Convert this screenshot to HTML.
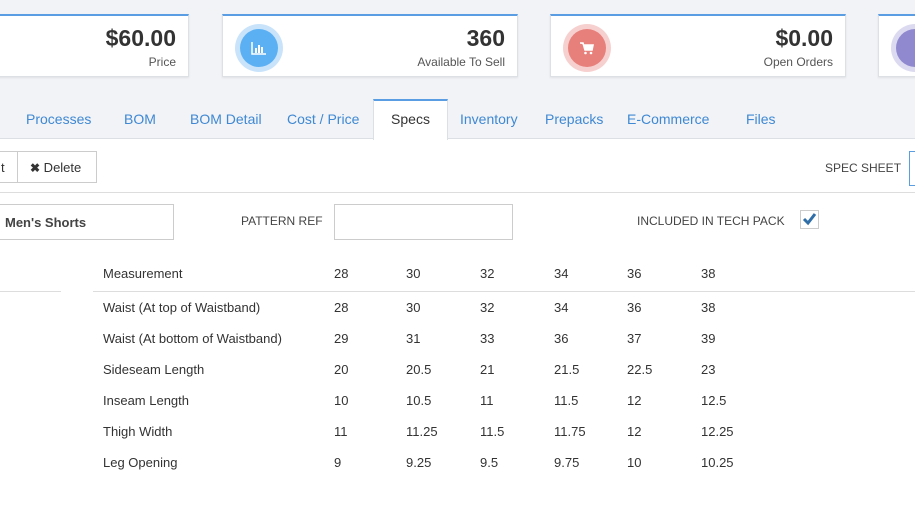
<!DOCTYPE html>
<html><head><style>
*{margin:0;padding:0;box-sizing:border-box}
body{width:915px;height:512px;overflow:hidden;background:#fff;font-family:"Liberation Sans",sans-serif;color:#333;position:relative}
.top{position:absolute;left:0;top:0;width:915px;height:139px;background:#f1f3f7;border-bottom:1px solid #dcdfe4}
.card{position:absolute;top:14px;height:63px;background:#fff;border:1px solid #dde1e6;border-top:2px solid #5a9de2;box-shadow:0 1px 2px rgba(0,0,0,.08)}
.card .v{position:absolute;right:12px;top:9px;font-size:23px;font-weight:bold;color:#333}
.card .l{position:absolute;right:12px;top:39px;font-size:12px;color:#555}
.ic{position:absolute;left:12px;top:8px;width:48px;height:48px;border-radius:50%;display:flex;align-items:center;justify-content:center}
.ic div{width:38px;height:38px;border-radius:50%;display:flex;align-items:center;justify-content:center}
.tab{position:absolute;top:111px;font-size:14px;color:#3f88d3}
.spec{position:absolute;left:373px;top:99px;width:75px;height:41px;background:#fff;border:1px solid #dcdfe4;border-top:2px solid #5a9de2;border-bottom:none;font-size:14px;color:#333;text-align:center;padding-top:10px}
.btn{position:absolute;top:151px;height:32px;border:1px solid #ccc;background:#fff;font-size:13px;padding:8px 0 0 12px}
.hr{position:absolute;height:1px;background:#ddd}
.lab{position:absolute;font-size:12px;color:#444}
.inp{position:absolute;border:1px solid #ccc;background:#fff}
.t{position:absolute;font-size:13px;color:#333}
</style></head><body>
<div class="top"></div>
<div class="card" style="left:-10px;width:199px"><div class="v">$60.00</div><div class="l">Price</div></div>
<div class="card" style="left:222px;width:296px"><div class="ic" style="background:#c9e3fb"><div style="background:#5bb0f3"><svg width="16" height="14" viewBox="0 0 16 14"><path d="M1 1V13H15" stroke="#fff" stroke-width="1.5" fill="none"/><rect x="4" y="7" width="2" height="5" fill="#fff"/><rect x="7" y="4" width="2" height="8" fill="#fff"/><rect x="10" y="6" width="2" height="6" fill="#fff"/></svg></div></div><div class="v">360</div><div class="l">Available To Sell</div></div>
<div class="card" style="left:550px;width:296px"><div class="ic" style="background:#f6d0cf"><div style="background:#e77f7b"><svg width="14" height="13" viewBox="0 0 14 13"><path d="M0 1H3L5 8H12L13 3H4" stroke="#fff" stroke-width="1.6" fill="#fff"/><circle cx="5.5" cy="11" r="1.3" fill="#fff"/><circle cx="11" cy="11" r="1.3" fill="#fff"/></svg></div></div><div class="v">$0.00</div><div class="l">Open Orders</div></div>
<div class="card" style="left:878px;width:60px"><div class="ic" style="background:#dcdaf0"><div style="background:#9089cf"></div></div></div>
<div class="tab" style="left:26px">Processes</div>
<div class="tab" style="left:124px">BOM</div>
<div class="tab" style="left:190px">BOM Detail</div>
<div class="tab" style="left:287px">Cost / Price</div>
<div class="spec">Specs</div>
<div class="tab" style="left:460px">Inventory</div>
<div class="tab" style="left:545px">Prepacks</div>
<div class="tab" style="left:627px">E-Commerce</div>
<div class="tab" style="left:746px">Files</div>
<div class="btn" style="left:-10px;width:28px;padding-left:10px">t</div>
<div class="btn" style="left:17px;width:80px"><b style="font-size:12px">✖</b> Delete</div>
<div class="lab" style="left:825px;top:161px">SPEC SHEET</div>
<div class="inp" style="left:909px;top:151px;width:20px;height:35px;border-color:#5a9de2"></div>
<div class="hr" style="left:0;top:192px;width:915px"></div>
<div class="inp" style="left:-5px;top:204px;width:179px;height:36px"></div>
<div class="t" style="left:5px;top:215px;font-weight:bold;color:#444">Men's Shorts</div>
<div class="lab" style="left:241px;top:214px">PATTERN REF</div>
<div class="inp" style="left:334px;top:204px;width:179px;height:36px"></div>
<div class="lab" style="left:637px;top:214px">INCLUDED IN TECH PACK</div>
<div class="inp" style="left:800px;top:210px;width:19px;height:19px"><svg width="17" height="17" viewBox="0 0 17 17"><path d="M3 8L7 12L14 3" stroke="#2f6ea8" stroke-width="3" fill="none"/></svg></div>
<div class="hr" style="left:0;top:291px;width:61px"></div>
<div class="hr" style="left:93px;top:291px;width:822px"></div>
<div class="t" style="left:103px;top:266px">Measurement</div>
<div class="t" style="left:334px;top:266px">28</div><div class="t" style="left:406px;top:266px">30</div><div class="t" style="left:480px;top:266px">32</div><div class="t" style="left:554px;top:266px">34</div><div class="t" style="left:627px;top:266px">36</div><div class="t" style="left:701px;top:266px">38</div>
<div class="t" style="left:103px;top:300px">Waist (At top of Waistband)</div>
<div class="t" style="left:334px;top:300px">28</div><div class="t" style="left:406px;top:300px">30</div><div class="t" style="left:480px;top:300px">32</div><div class="t" style="left:554px;top:300px">34</div><div class="t" style="left:627px;top:300px">36</div><div class="t" style="left:701px;top:300px">38</div>
<div class="t" style="left:103px;top:331px">Waist (At bottom of Waistband)</div>
<div class="t" style="left:334px;top:331px">29</div><div class="t" style="left:406px;top:331px">31</div><div class="t" style="left:480px;top:331px">33</div><div class="t" style="left:554px;top:331px">36</div><div class="t" style="left:627px;top:331px">37</div><div class="t" style="left:701px;top:331px">39</div>
<div class="t" style="left:103px;top:362px">Sideseam Length</div>
<div class="t" style="left:334px;top:362px">20</div><div class="t" style="left:406px;top:362px">20.5</div><div class="t" style="left:480px;top:362px">21</div><div class="t" style="left:554px;top:362px">21.5</div><div class="t" style="left:627px;top:362px">22.5</div><div class="t" style="left:701px;top:362px">23</div>
<div class="t" style="left:103px;top:393px">Inseam Length</div>
<div class="t" style="left:334px;top:393px">10</div><div class="t" style="left:406px;top:393px">10.5</div><div class="t" style="left:480px;top:393px">11</div><div class="t" style="left:554px;top:393px">11.5</div><div class="t" style="left:627px;top:393px">12</div><div class="t" style="left:701px;top:393px">12.5</div>
<div class="t" style="left:103px;top:424px">Thigh Width</div>
<div class="t" style="left:334px;top:424px">11</div><div class="t" style="left:406px;top:424px">11.25</div><div class="t" style="left:480px;top:424px">11.5</div><div class="t" style="left:554px;top:424px">11.75</div><div class="t" style="left:627px;top:424px">12</div><div class="t" style="left:701px;top:424px">12.25</div>
<div class="t" style="left:103px;top:455px">Leg Opening</div>
<div class="t" style="left:334px;top:455px">9</div><div class="t" style="left:406px;top:455px">9.25</div><div class="t" style="left:480px;top:455px">9.5</div><div class="t" style="left:554px;top:455px">9.75</div><div class="t" style="left:627px;top:455px">10</div><div class="t" style="left:701px;top:455px">10.25</div>
</body></html>
